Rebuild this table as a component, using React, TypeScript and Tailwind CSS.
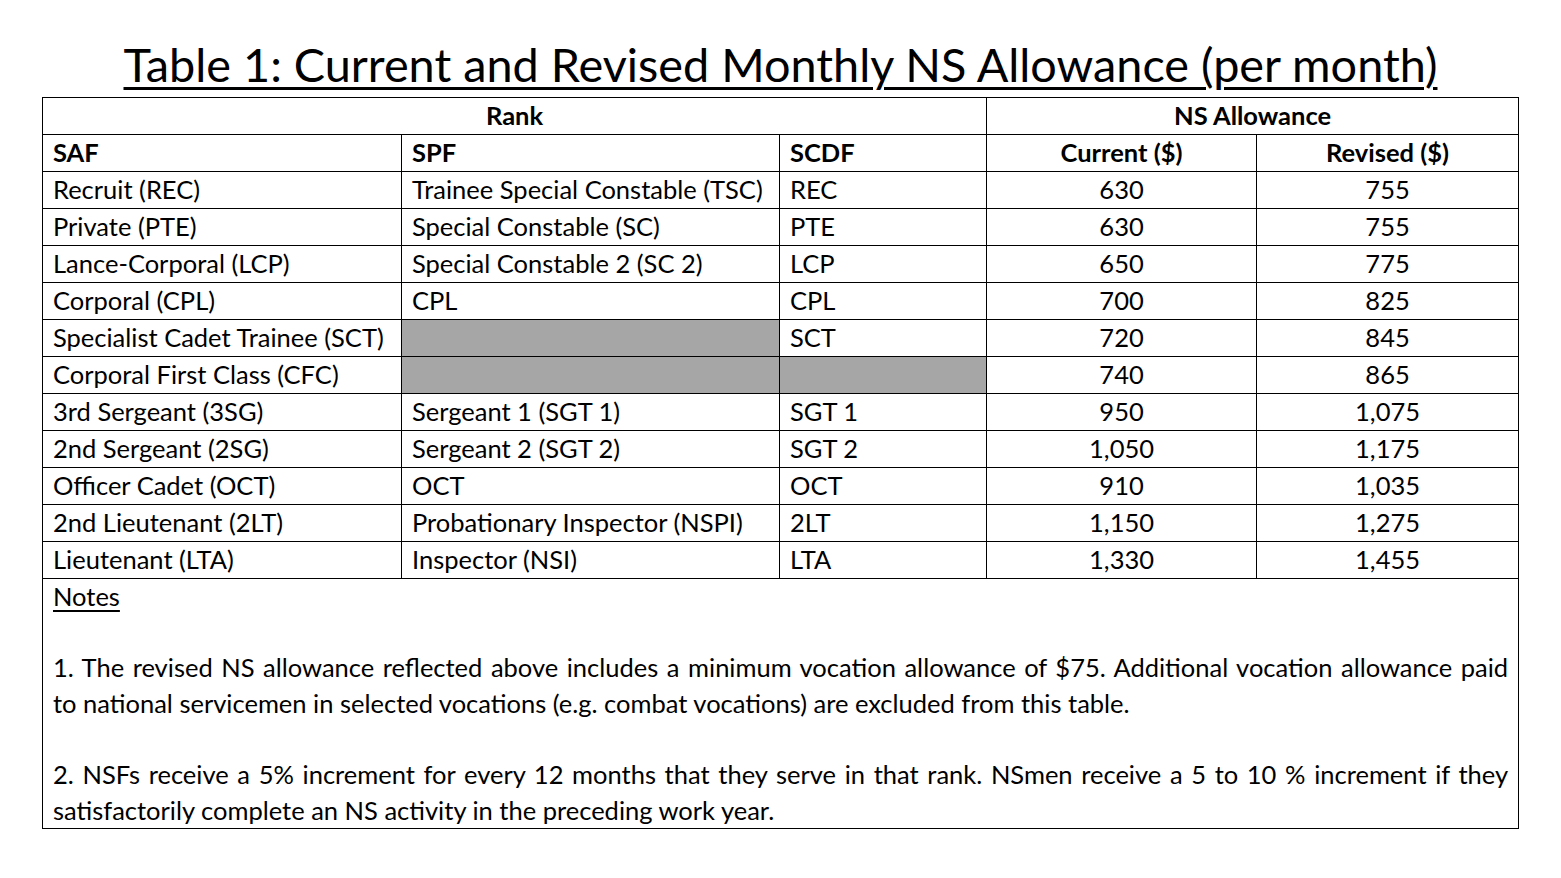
const rows: [string, string | null, string | null, string, string][] = [
  ["Recruit (REC)", "Trainee Special Constable (TSC)", "REC", "630", "755"],
  ["Private (PTE)", "Special Constable (SC)", "PTE", "630", "755"],
  ["Lance-Corporal (LCP)", "Special Constable 2 (SC 2)", "LCP", "650", "775"],
  ["Corporal (CPL)", "CPL", "CPL", "700", "825"],
  ["Specialist Cadet Trainee (SCT)", null, "SCT", "720", "845"],
  ["Corporal First Class (CFC)", null, null, "740", "865"],
  ["3rd Sergeant (3SG)", "Sergeant 1 (SGT 1)", "SGT 1", "950", "1,075"],
  ["2nd Sergeant (2SG)", "Sergeant 2 (SGT 2)", "SGT 2", "1,050", "1,175"],
  ["Officer Cadet (OCT)", "OCT", "OCT", "910", "1,035"],
  ["2nd Lieutenant (2LT)", "Probationary Inspector (NSPI)", "2LT", "1,150", "1,275"],
  ["Lieutenant (LTA)", "Inspector (NSI)", "LTA", "1,330", "1,455"],
];

function Cell({ value }: { value: string | null }) {
  if (value === null) {
    return <td className="border border-black bg-[#a6a6a6] p-0" />;
  }
  return <td className="border border-black px-[10px] py-0 leading-none whitespace-nowrap">{value}</td>;
}

export default function App() {
  return (
    <div
      className="w-[1561px] h-[878px] bg-white text-black pt-[36px]"
      style={{ fontFamily: "Lato, 'Open Sans', sans-serif" }}
    >
      <h1 className="text-center text-[46.8px] leading-[56px] underline decoration-[3px] underline-offset-[5px]">
        Table 1: Current and Revised Monthly NS Allowance (per month)
      </h1>
      <table className="ml-[42px] mt-[5px] w-[1476px] table-fixed border-collapse text-[25.5px]">
        <colgroup>
          <col className="w-[359px]" />
          <col className="w-[378px]" />
          <col className="w-[207px]" />
          <col className="w-[270px]" />
          <col className="w-[262px]" />
        </colgroup>
        <tbody>
          <tr className="h-[37px] font-bold">
            <td colSpan={3} className="border border-black text-center leading-none">Rank</td>
            <td colSpan={2} className="border border-black text-center leading-none">NS Allowance</td>
          </tr>
          <tr className="h-[37px] font-bold">
            <td className="border border-black px-[10px] leading-none">SAF</td>
            <td className="border border-black px-[10px] leading-none">SPF</td>
            <td className="border border-black px-[10px] leading-none">SCDF</td>
            <td className="border border-black text-center leading-none">Current ($)</td>
            <td className="border border-black text-center leading-none">Revised ($)</td>
          </tr>
          {rows.map((r) => (
            <tr key={r[0]} className="h-[37px]">
              <Cell value={r[0]} />
              <Cell value={r[1]} />
              <Cell value={r[2]} />
              <td className="border border-black text-center leading-none">{r[3]}</td>
              <td className="border border-black text-center leading-none">{r[4]}</td>
            </tr>
          ))}
          <tr>
            <td colSpan={5} className="border border-black px-[10px] pt-0 pb-0 text-justify leading-[35.6px]">
              <p className="underline underline-offset-[4px]">Notes</p>
              <p className="mt-[35.6px] [text-align-last:justify]">
                1. The revised NS allowance reflected above includes a minimum vocation allowance of $75. Additional
                vocation allowance paid
              </p>
              <p>to national servicemen in selected vocations (e.g. combat vocations) are excluded from this table.</p>
              <p className="mt-[35.6px]">
                2. NSFs receive a 5% increment for every 12 months that they serve in that rank. NSmen receive a 5 to
                10 % increment if they satisfactorily complete an NS activity in the preceding work year.
              </p>
            </td>
          </tr>
        </tbody>
      </table>
    </div>
  );
}
